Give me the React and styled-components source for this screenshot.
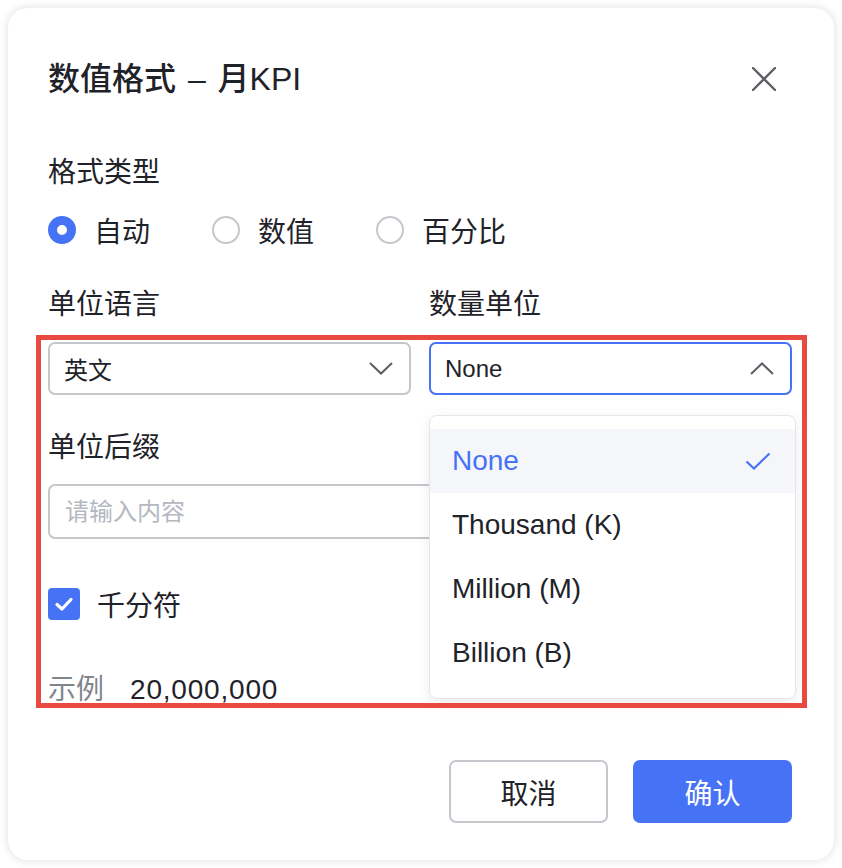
import styled, { createGlobalStyle } from "styled-components";
import { useState } from "react";

const blue = "#4672f6";
const text = "#1f2329";
const border = "#c4c7cc";

const GlobalStyle = createGlobalStyle`
  * { box-sizing: border-box; }
  body {
    margin: 0;
    background: #ffffff;
    font-family: "Liberation Sans", "Noto Sans CJK SC", sans-serif;
    color: ${text};
  }
`;

const units = ["None", "Thousand (K)", "Million (M)", "Billion (B)"];
const types = ["自动", "数值", "百分比"];

export default function App() {
  const [type, setType] = useState(0);
  const [unit, setUnit] = useState(0);
  const [thousands, setThousands] = useState(true);

  return (
    <Page>
      <GlobalStyle />
      <Dialog>
        <Header>
          <Title>数值格式 – 月KPI</Title>
          <CloseButton aria-label="关闭">
            <svg width="24" height="24" viewBox="0 0 24 24">
              <path d="M1 1L23 23M23 1L1 23" stroke="#5c6066" strokeWidth="2.4" strokeLinecap="round" />
            </svg>
          </CloseButton>
        </Header>

        <Label $top={52}>格式类型</Label>
        <RadioRow>
          {types.map((t, i) => (
            <RadioItem key={t} onClick={() => setType(i)}>
              <Radio $checked={type === i} />
              {t}
            </RadioItem>
          ))}
        </RadioRow>

        <TwoCols>
          <Field>
            <Label>单位语言</Label>
            <Select>
              英文
              <Chevron />
            </Select>
          </Field>
          <Field>
            <Label>数量单位</Label>
            <SelectWrap>
              <Select $active>
                {units[unit]}
                <Chevron $up />
              </Select>
              <Menu>
                {units.map((u, i) => (
                  <MenuItem key={u} $selected={unit === i} onClick={() => setUnit(i)}>
                    {u}
                    {unit === i && (
                      <svg width="26" height="18" viewBox="0 0 26 18">
                        <path d="M1.5 9.5L9 16.5L24.5 1.5" fill="none" stroke={blue} strokeWidth="2.2" />
                      </svg>
                    )}
                  </MenuItem>
                ))}
              </Menu>
            </SelectWrap>
          </Field>
        </TwoCols>

        <Label $top={33}>单位后缀</Label>
        <Input placeholder="请输入内容" />

        <CheckRow onClick={() => setThousands(!thousands)}>
          <Checkbox $checked={thousands}>
            {thousands && (
              <svg width="20" height="16" viewBox="0 0 20 16">
                <path d="M3 8.5L8 13L17 3.5" fill="none" stroke="#fff" strokeWidth="3.2" strokeLinecap="round" strokeLinejoin="round" />
              </svg>
            )}
          </Checkbox>
          千分符
        </CheckRow>

        <Example>
          <ExampleLabel>示例</ExampleLabel>
          <ExampleValue>20,000,000</ExampleValue>
        </Example>

        <Footer>
          <Button>取消</Button>
          <Button $primary>确认</Button>
        </Footer>

        <Highlight />
      </Dialog>
    </Page>
  );
}

function Chevron({ $up }) {
  return (
    <ChevronIcon width="24" height="13" viewBox="0 0 24 13">
      <path
        d={$up ? "M1 12L12 1.5L23 12" : "M1 1L12 11.5L23 1"}
        fill="none"
        stroke="#5c6066"
        strokeWidth="2"
      />
    </ChevronIcon>
  );
}

const Page = styled.div`
  padding: 8px;
  width: 842px;
`;

const Dialog = styled.div`
  position: relative;
  width: 826px;
  background: #ffffff;
  border-radius: 20px;
  box-shadow: 0 0 10px rgba(0, 0, 0, 0.14);
  padding: 49px 42px 37px 40px;
  display: flex;
  flex-direction: column;
`;

const Header = styled.div`
  display: flex;
  justify-content: space-between;
  align-items: center;
  height: 44px;
`;

const Title = styled.h1`
  margin: 0;
  font-size: 32px;
  line-height: 44px;
  font-weight: 500;
  color: ${text};
  word-spacing: 3px;
`;

const CloseButton = styled.button`
  border: none;
  background: none;
  padding: 0;
  margin-right: 16px;
  width: 24px;
  height: 24px;
  display: flex;
  cursor: pointer;
`;

const Label = styled.div`
  margin-top: ${(p) => p.$top || 0}px;
  font-size: 28px;
  line-height: 40px;
  color: ${text};
`;

const RadioRow = styled.div`
  display: flex;
  gap: 62px;
  margin-top: 17px;
  height: 40px;
`;

const RadioItem = styled.label`
  display: flex;
  align-items: center;
  gap: 18px;
  font-size: 28px;
  cursor: pointer;
`;

const Radio = styled.span`
  width: 28px;
  height: 28px;
  border-radius: 50%;
  border: ${(p) => (p.$checked ? `9px solid ${blue}` : `2px solid ${border}`)};
  background: #ffffff;
  flex-shrink: 0;
`;

const TwoCols = styled.div`
  display: grid;
  grid-template-columns: 1fr 1fr;
  column-gap: 18px;
  margin-top: 35px;
`;

const Field = styled.div`
  display: flex;
  flex-direction: column;
  gap: 17px;
`;

const SelectWrap = styled.div`
  position: relative;
  z-index: 2;
`;

const Select = styled.div`
  height: 53px;
  border: 2px solid ${(p) => (p.$active ? blue : border)};
  border-radius: 7px;
  padding: 0 16px 0 14px;
  display: flex;
  align-items: center;
  justify-content: space-between;
  font-size: 24px;
  color: ${text};
  background: #ffffff;
`;

const ChevronIcon = styled.svg`
  flex-shrink: 0;
`;

const Menu = styled.div`
  position: absolute;
  top: calc(100% + 20px);
  left: 0;
  width: calc(100% + 4px);
  padding: 13px 0;
  background: #ffffff;
  border: 1px solid #e4e6ea;
  border-radius: 8px;
  box-shadow: 0 4px 14px rgba(0, 0, 0, 0.08);
`;

const MenuItem = styled.div`
  height: 64px;
  padding: 0 24px 0 22px;
  display: flex;
  align-items: center;
  justify-content: space-between;
  font-size: 28px;
  color: ${(p) => (p.$selected ? blue : text)};
  background: ${(p) => (p.$selected ? "#f4f6fa" : "transparent")};
  cursor: pointer;
`;

const Input = styled.input`
  margin-top: 16px;
  height: 55px;
  border: 2px solid ${border};
  border-radius: 7px;
  padding: 0 15px;
  font-family: inherit;
  font-size: 24px;
  color: ${text};
  outline: none;

  &::placeholder {
    color: #b4b8bf;
  }
`;

const CheckRow = styled.label`
  display: flex;
  align-items: center;
  gap: 17px;
  margin-top: 45px;
  height: 40px;
  font-size: 28px;
  cursor: pointer;
`;

const Checkbox = styled.span`
  width: 32px;
  height: 32px;
  border-radius: 4px;
  background: ${(p) => (p.$checked ? blue : "#fff")};
  border: ${(p) => (p.$checked ? "none" : `2px solid ${border}`)};
  display: flex;
  align-items: center;
  justify-content: center;
`;

const Example = styled.div`
  display: flex;
  gap: 26px;
  margin-top: 46px;
  font-size: 28px;
  line-height: 40px;
  color: ${text};
`;

const ExampleLabel = styled.span`
  color: #80868e;
`;

const ExampleValue = styled.span`
  letter-spacing: 0.8px;
`;

const Footer = styled.div`
  display: flex;
  justify-content: flex-end;
  gap: 25px;
  margin-top: 50px;
`;

const Button = styled.button`
  width: 159px;
  height: 63px;
  border-radius: 7px;
  font-family: inherit;
  font-size: 28px;
  cursor: pointer;
  border: ${(p) => (p.$primary ? "none" : `2px solid ${border}`)};
  background: ${(p) => (p.$primary ? blue : "#ffffff")};
  color: ${(p) => (p.$primary ? "#ffffff" : text)};
`;

const Highlight = styled.div`
  position: absolute;
  left: 28px;
  top: 327px;
  width: 771px;
  height: 373px;
  border: 5px solid #e84a3f;
  pointer-events: none;
  z-index: 3;
`;
